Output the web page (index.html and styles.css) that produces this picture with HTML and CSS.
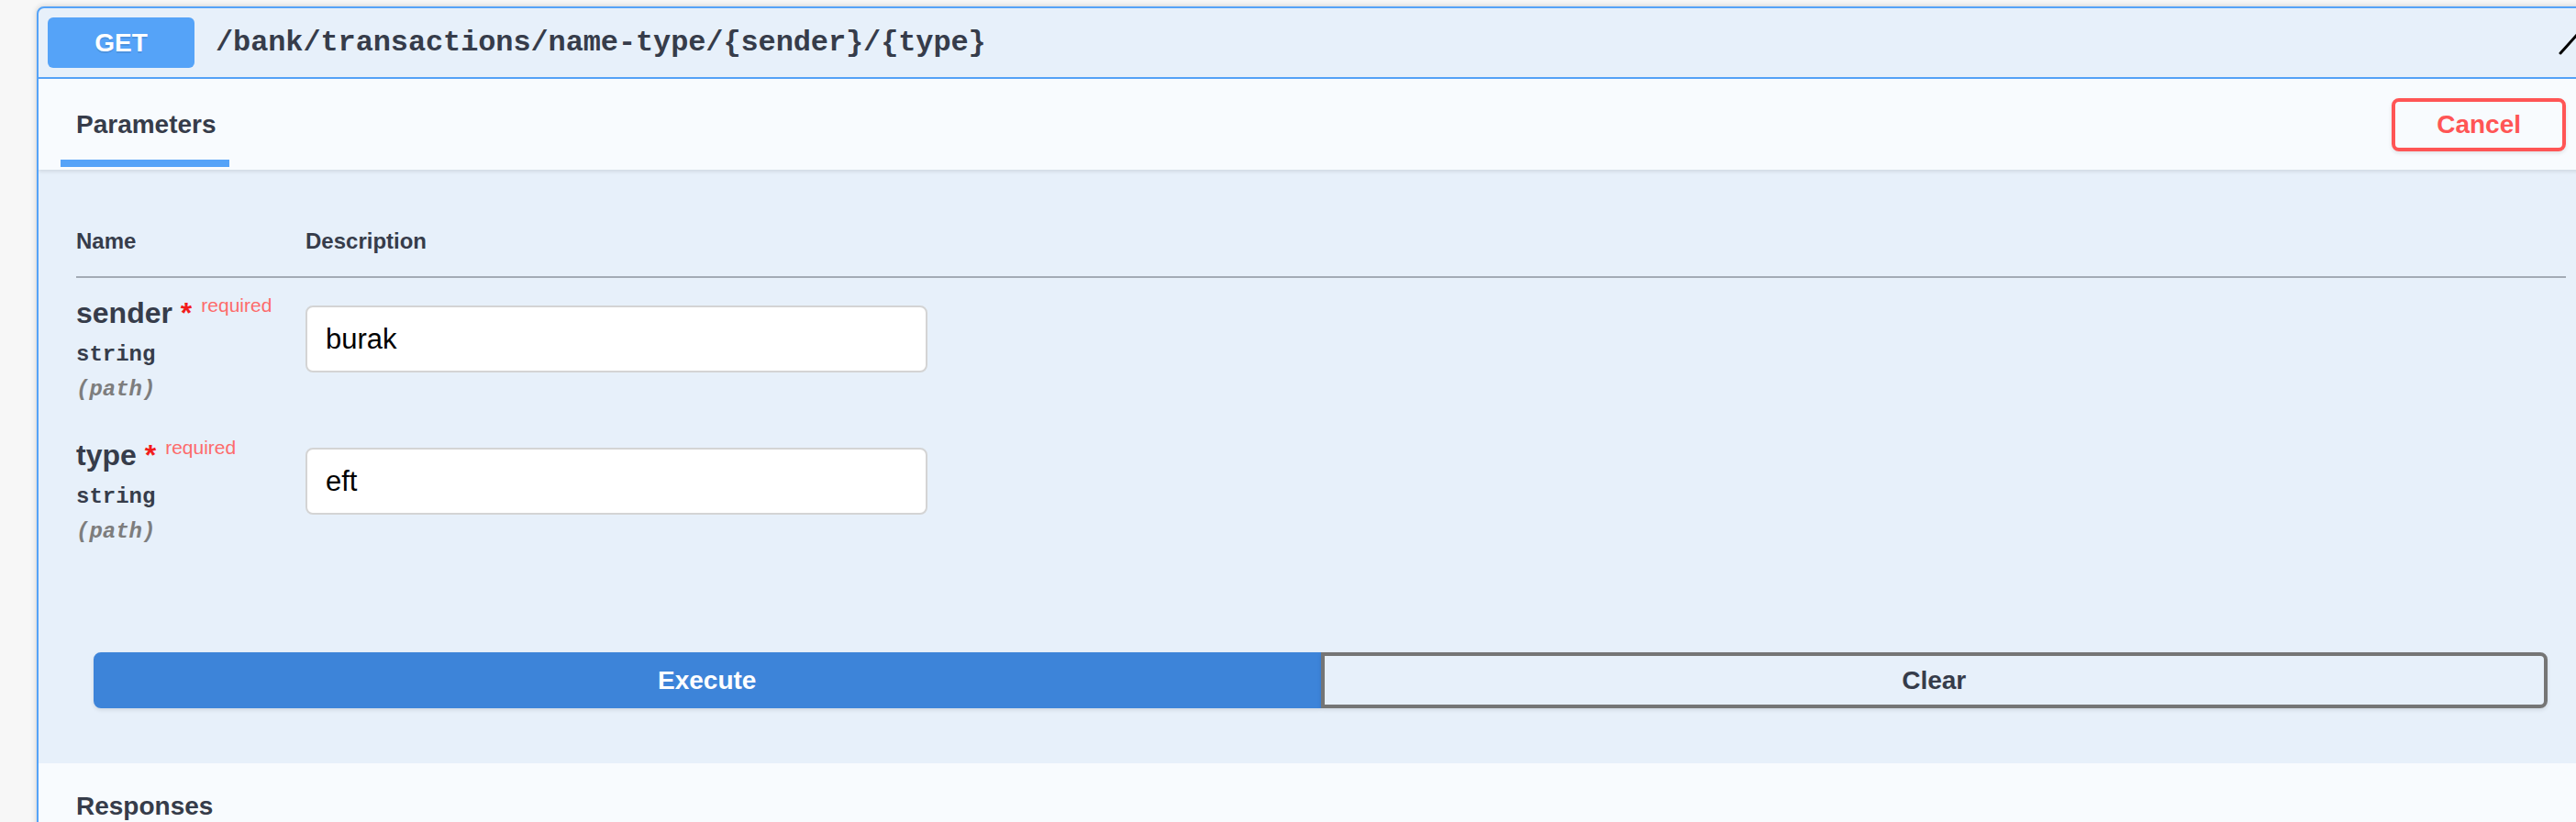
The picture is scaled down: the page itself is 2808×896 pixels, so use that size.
FILE: index.html
```html
<!DOCTYPE html>
<html lang="en">
<head>
<meta charset="utf-8">
<title>GET /bank/transactions/name-type/{sender}/{type}</title>
<link rel="stylesheet" href="styles.css">
</head>
<body>
<div class="page">
  <div class="opblock">
    <div class="summary">
      <span class="method">GET</span>
      <span class="path">/bank/transactions/name-type/{sender}/{type}</span>
      <svg class="arrow" width="40" height="40" viewBox="0 0 40 40" aria-hidden="true">
        <path d="M4 31 L22 11 L40 31" fill="none" stroke="#000" stroke-width="3" stroke-linecap="round" stroke-linejoin="round"/>
      </svg>
    </div>
    <div class="section-header">
      <div class="tab"><h4>Parameters</h4></div>
      <button class="btn cancel" type="button">Cancel</button>
    </div>
    <div class="params">
      <div class="ptable">
        <div class="thead">
          <div class="th">Name</div>
          <div class="th">Description</div>
        </div>
        <div class="prow">
          <div class="name-col">
            <div class="pname">sender<span class="star">&nbsp;*</span><span class="req">required</span></div>
            <div class="ptype">string</div>
            <div class="pin">(path)</div>
          </div>
          <div class="desc-col"><input class="pinput" type="text" value="burak"></div>
        </div>
        <div class="prow">
          <div class="name-col">
            <div class="pname">type<span class="star">&nbsp;*</span><span class="req">required</span></div>
            <div class="ptype">string</div>
            <div class="pin">(path)</div>
          </div>
          <div class="desc-col"><input class="pinput" type="text" value="eft"></div>
        </div>
      </div>
    </div>
    <div class="execute-wrapper">
      <button class="btn execute" type="button">Execute</button>
      <button class="btn clear" type="button">Clear</button>
    </div>
    <div class="section-header responses">
      <h4>Responses</h4>
    </div>
  </div>
</div>
</body>
</html>
```

FILE: styles.css
```css
html, body {
  margin: 0;
  padding: 0;
  overflow: hidden;
  background: #f7f7f7;
  font-family: "Liberation Sans", Arial, sans-serif;
  color: #363c4a;
}

.page {
  padding: 7px 0 0 40px;
  width: 2900px;
}

.opblock {
  width: 2799px;
  box-sizing: border-box;
  border: 2px solid #55a3f8;
  border-radius: 8px;
  background: #e7f0fa;
  box-shadow: 0 0 6px rgba(0, 0, 0, 0.19);
  overflow: hidden;
}

.summary {
  display: flex;
  align-items: center;
  padding: 10px;
  border-bottom: 2px solid #55a3f8;
}

.method {
  width: 160px;
  height: 55px;
  line-height: 55px;
  text-align: center;
  background: #55a3f8;
  border-radius: 6px;
  color: #fff;
  font-size: 28px;
  font-weight: bold;
  text-shadow: 0 2px 0 rgba(0, 0, 0, 0.1);
}

.path {
  flex: 1;
  padding-left: 23px;
  font-family: "Liberation Mono", "Courier New", monospace;
  font-size: 32px;
  letter-spacing: -0.12px;
  font-weight: bold;
  color: #363c4a;
}

.arrow {
  flex: none;
}

.section-header {
  position: relative;
  display: flex;
  align-items: center;
  height: 99px;
  box-sizing: border-box;
  padding: 0 40px 0 24px;
  background: #f8fbfe;
  box-shadow: 0 2px 4px rgba(0, 0, 0, 0.1);
}

.tab {
  align-self: flex-end;
  margin-bottom: 3px;
  padding: 0 14px 22px 17px;
  border-bottom: 8px solid #55a3f8;
}

.tab h4,
.responses h4 {
  margin: 0;
  font-size: 28px;
  line-height: 32px;
  font-weight: bold;
  color: #363c4a;
}

.responses {
  padding-left: 41px;
  align-items: flex-start;
  padding-top: 31px;
  box-shadow: none;
}

.btn {
  font-family: "Liberation Sans", Arial, sans-serif;
  font-size: 28px;
  font-weight: bold;
  cursor: pointer;
  box-shadow: 0 2px 4px rgba(0, 0, 0, 0.1);
}

.cancel {
  margin-left: auto;
  height: 58px;
  padding: 0 45px;
  border: 4px solid #ff5555;
  border-radius: 8px;
  background: transparent;
  color: #ff5555;
}

.params {
  padding: 40px 40px 40px 41px;
}

.thead {
  display: grid;
  grid-template-columns: 250px 1fr;
  border-bottom: 2px solid #a3abb5;
}

.th {
  padding: 24px 0;
  font-size: 24px;
  line-height: 28px;
  font-weight: bold;
  color: #363c4a;
}

.prow {
  display: grid;
  grid-template-columns: 250px 1fr;
  padding: 20px 0;
}

.pname {
  font-size: 32px;
  line-height: 37px;
  font-weight: bold;
  color: #363c4a;
  white-space: nowrap;
}

.star {
  color: #f21c1c;
}

.req {
  position: relative;
  top: -12px;
  padding: 10px;
  font-size: 21px;
  font-weight: normal;
  color: #fd6b6b;
}

.ptype {
  padding: 10px 0;
  font-family: "Liberation Mono", "Courier New", monospace;
  font-size: 24px;
  line-height: 27px;
  font-weight: bold;
  color: #363c4a;
}

.pin {
  padding-top: 1px;
  font-family: "Liberation Mono", "Courier New", monospace;
  font-size: 24px;
  line-height: 27px;
  font-style: italic;
  font-weight: bold;
  color: #7d7d7d;
}

.desc-col {
  padding-top: 10px;
}

.pinput {
  display: block;
  width: 678px;
  height: 73px;
  box-sizing: border-box;
  margin: 0;
  padding: 0 20px;
  border: 2px solid #d4d4d4;
  border-radius: 8px;
  background: #fff;
  font-family: "Liberation Sans", Arial, sans-serif;
  font-size: 31px;
  color: #000;
  outline: none;
}

.execute-wrapper {
  display: flex;
  padding: 58px 60px 60px;
}

.execute,
.clear {
  flex: 1;
  height: 61px;
  box-sizing: border-box;
  border: 4px solid;
  padding: 0;
}

.execute {
  background: #3d84d9;
  border-color: #3d84d9;
  color: #fff;
  border-radius: 8px 0 0 8px;
}

.clear {
  background: transparent;
  border-color: #757575;
  color: #363c4a;
  border-radius: 0 8px 8px 0;
}
```
